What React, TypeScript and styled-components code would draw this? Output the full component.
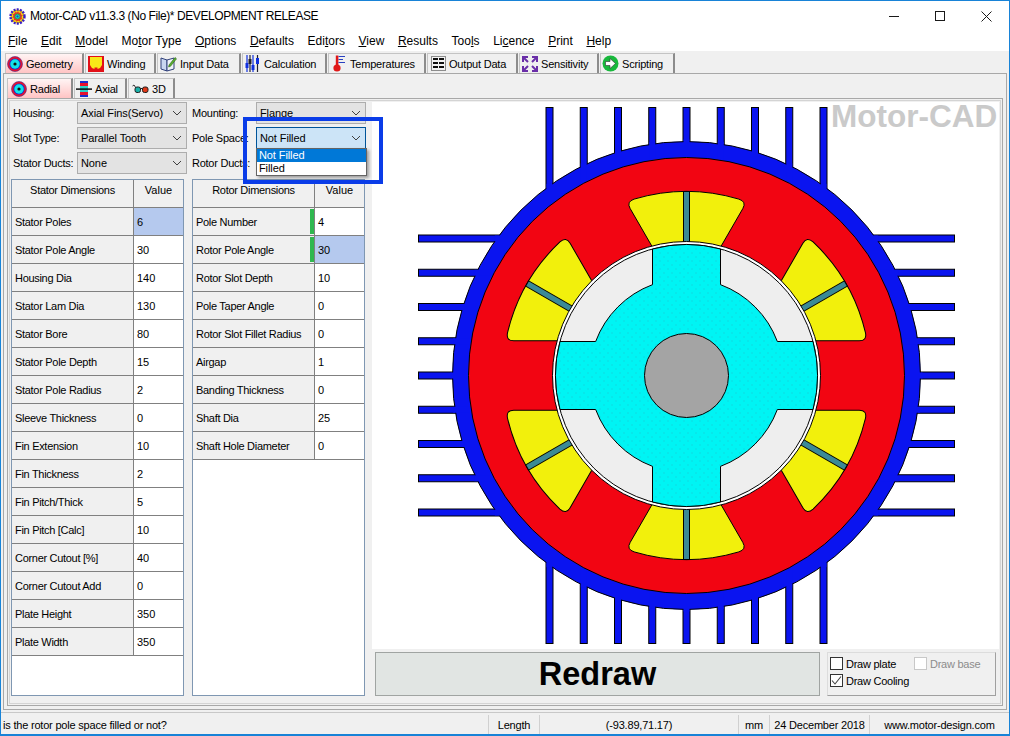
import React from "react";
import styled, { createGlobalStyle } from "styled-components";

const GlobalStyle = createGlobalStyle`
  html, body {
    margin: 0;
    padding: 0;
    background: #ffffff;
  }
  * {
    box-sizing: border-box;
  }
`;

const uiFont = `"Liberation Sans", Arial, sans-serif`;

const Window = styled.div`
  width: 1010px;
  height: 736px;
  display: flex;
  flex-direction: column;
  background: #f0f0f0;
  border: 1px solid #1883d7;
  border-bottom-width: 2px;
  font-family: ${uiFont};
  font-size: 11px;
  color: #000000;
  overflow: hidden;
`;

const TitleBar = styled.div`
  height: 30px;
  flex: none;
  display: flex;
  align-items: center;
  background: #ffffff;
  padding-left: 8px;
`;

const TitleText = styled.div`
  margin-left: 4px;
  font-size: 12px;
  letter-spacing: -0.42px;
  flex: 1;
  white-space: nowrap;
`;

const WinButton = styled.div`
  width: 46px;
  height: 30px;
  display: flex;
  align-items: center;
  justify-content: center;
`;

const MenuBar = styled.div`
  height: 20px;
  flex: none;
  display: flex;
  align-items: center;
  gap: 13.6px;
  padding-left: 7px;
  background: #ffffff;
  font-size: 12px;
`;

const MainTabs = styled.div`
  height: 22px;
  flex: none;
  display: flex;
  align-items: flex-end;
  padding-left: 4px;
  gap: 1px;
`;

const Tab = styled.div<{ $width: number; $pad: number; $active?: boolean }>`
  width: ${(p) => p.$width}px;
  height: 20px;
  display: flex;
  align-items: center;
  gap: 3px;
  padding-left: ${(p) => p.$pad}px;
  white-space: nowrap;
  letter-spacing: -0.2px;
  background: ${(p) =>
    p.$active ? "linear-gradient(#fff4f4, #ffc4c4)" : "#f0f0f0"};
  border: 1px solid #c4c4c4;
  border-bottom: none;
  border-right: 2px solid #8c8c8c;
`;

const MainPage = styled.div`
  height: 637px;
  flex: none;
  margin: 0 2px 0 2px;
  border: 1px solid #a8a8a8;
  padding: 4px 3px 3px 3px;
  display: flex;
  flex-direction: column;
`;

const SubTabs = styled.div`
  height: 20px;
  flex: none;
  display: flex;
  gap: 1px;
  align-items: flex-end;
`;

const SubPage = styled.div`
  flex: 1;
  min-height: 0;
  border: 1px solid #a8a8a8;
  outline: 1px solid #d4d4d4;
  outline-offset: -3px;
  padding-top: 3px;
  display: flex;
`;

const LeftPanel = styled.div`
  width: 364px;
  flex: none;
  padding-left: 3px;
  display: flex;
  flex-direction: column;
`;

const FormGrid = styled.div`
  display: grid;
  grid-template-columns: 64px 110px 69px 110px;
  grid-auto-rows: 22px;
  row-gap: 3px;
  padding-left: 2px;
`;

const FieldLabel = styled.div<{ $offset?: boolean }>`
  display: flex;
  align-items: center;
  white-space: nowrap;
  letter-spacing: -0.25px;
  margin-left: ${(p) => (p.$offset ? "5px" : "0")};
`;

const Field = styled.div`
  position: relative;
`;

const SelectBox = styled.div<{ $focus?: boolean }>`
  height: 22px;
  display: flex;
  align-items: center;
  justify-content: space-between;
  padding: 0 4px 0 3px;
  letter-spacing: -0.1px;
  background: ${(p) => (p.$focus ? "#cce4f7" : "#e3e3e3")};
  border: 1px solid ${(p) => (p.$focus ? "#005499" : "#adadad")};
`;

const DropList = styled.div`
  position: absolute;
  left: 0;
  top: 21px;
  width: 111px;
  background: #ffffff;
  border: 1px solid #646464;
  box-shadow: 2px 2px 3px rgba(0, 0, 0, 0.35);
  z-index: 3;
`;

const DropItem = styled.div<{ $selected?: boolean }>`
  height: 13px;
  line-height: 13px;
  padding-left: 2px;
  letter-spacing: -0.1px;
  background: ${(p) => (p.$selected ? "#0078d7" : "#ffffff")};
  color: ${(p) => (p.$selected ? "#ffffff" : "#000000")};
`;

const HighlightBox = styled.div`
  position: absolute;
  left: -13px;
  top: -10px;
  width: 140px;
  height: 67px;
  border: 4px solid #0a3ce8;
  z-index: 4;
  pointer-events: none;
`;

const TablesRow = styled.div`
  margin-top: 5px;
  display: flex;
  gap: 8px;
`;

const DimTable = styled.div`
  width: 173px;
  height: 517px;
  background: #ffffff;
  border: 1px solid #7f97b2;
`;

const Row = styled.div`
  height: 28px;
  display: grid;
  grid-template-columns: 122px 1fr;
  border-bottom: 1px solid #808080;
`;

const LabelCell = styled.div<{ $header?: boolean }>`
  position: relative;
  display: flex;
  align-items: center;
  justify-content: ${(p) => (p.$header ? "center" : "flex-start")};
  padding-left: ${(p) => (p.$header ? "0" : "3px")};
  padding-bottom: ${(p) => (p.$header ? "7px" : "0")};
  background: #f0f0f0;
  border-right: 1px solid #808080;
  letter-spacing: -0.3px;
  white-space: nowrap;
`;

const Marker = styled.span`
  position: absolute;
  right: 0;
  top: 1px;
  bottom: 1px;
  width: 4px;
  background: #2fb84f;
`;

const ValueCell = styled.div<{ $header?: boolean; $selected?: boolean }>`
  display: flex;
  align-items: center;
  justify-content: ${(p) => (p.$header ? "center" : "flex-start")};
  padding-left: ${(p) => (p.$header ? "0" : "3px")};
  padding-bottom: ${(p) => (p.$header ? "7px" : "0")};
  background: ${(p) =>
    p.$header ? "#f0f0f0" : p.$selected ? "#b5c9ee" : "#ffffff"};
`;

const RightPanel = styled.div`
  flex: 1;
  min-width: 0;
  display: flex;
  flex-direction: column;
  padding-right: 3px;
`;

const Canvas = styled.div`
  height: 547px;
  flex: none;
  background: #ffffff;
`;

const BottomRow = styled.div`
  margin-top: 3px;
  height: 44px;
  display: flex;
  padding-left: 3px;
  gap: 7px;
`;

const RedrawButton = styled.div`
  width: 445px;
  height: 44px;
  display: flex;
  align-items: center;
  justify-content: center;
  background: #e1e5e3;
  border: 1px solid #a0a4a2;
  font-size: 32.5px;
  font-weight: bold;
`;

const OptionsBox = styled.div`
  width: 169px;
  height: 44px;
  border: 1px solid #dcdcdc;
  border-right-color: #a0a0a0;
  border-bottom-color: #a0a0a0;
  padding: 2px 0 0 2px;
  display: grid;
  grid-template-columns: 84px 1fr;
  grid-auto-rows: 17px;
  align-content: start;
`;

const CheckRow = styled.div<{ $disabled?: boolean }>`
  display: flex;
  align-items: center;
  gap: 3px;
  letter-spacing: -0.25px;
  white-space: nowrap;
  color: ${(p) => (p.$disabled ? "#8c8c8c" : "#000000")};
`;

const CheckBox = styled.span<{ $disabled?: boolean }>`
  width: 13px;
  height: 13px;
  display: flex;
  align-items: center;
  justify-content: center;
  background: #ffffff;
  border: 1px solid ${(p) => (p.$disabled ? "#c8c8c8" : "#333333")};
`;

const StatusBar = styled.div`
  flex: 1;
  display: flex;
  align-items: center;
  margin-top: 2px;
  padding-top: 2px;
  border-top: 1px solid #c8c8c8;
`;

const StatusCell = styled.div<{ $width: number; $left?: boolean }>`
  width: ${(p) => p.$width}px;
  height: 20px;
  flex: none;
  display: flex;
  align-items: center;
  justify-content: ${(p) => (p.$left ? "flex-start" : "center")};
  padding-left: ${(p) => (p.$left ? "2px" : "0")};
  border-right: 1px solid #d0d0d0;
  white-space: nowrap;
  letter-spacing: -0.2px;
  &:last-child {
    border-right: none;
  }
`;

const menus: [string, string, string][] = [
  ["", "F", "ile"],
  ["", "E", "dit"],
  ["", "M", "odel"],
  ["Mo", "t", "or Type"],
  ["", "O", "ptions"],
  ["", "D", "efaults"],
  ["Edi", "t", "ors"],
  ["", "V", "iew"],
  ["", "R", "esults"],
  ["Too", "l", "s"],
  ["Li", "c", "ence"],
  ["", "P", "rint"],
  ["", "H", "elp"],
];

const statorRows: [string, string][] = [
  ["Stator Poles", "6"],
  ["Stator Pole Angle", "30"],
  ["Housing Dia", "140"],
  ["Stator Lam Dia", "130"],
  ["Stator Bore", "80"],
  ["Stator Pole Depth", "15"],
  ["Stator Pole Radius", "2"],
  ["Sleeve Thickness", "0"],
  ["Fin Extension", "10"],
  ["Fin Thickness", "2"],
  ["Fin Pitch/Thick", "5"],
  ["Fin Pitch [Calc]", "10"],
  ["Corner Cutout [%]", "40"],
  ["Corner Cutout Add", "0"],
  ["Plate Height", "350"],
  ["Plate Width", "350"],
];

const rotorRows: [string, string][] = [
  ["Pole Number", "4"],
  ["Rotor Pole Angle", "30"],
  ["Rotor Slot Depth", "10"],
  ["Pole Taper Angle", "0"],
  ["Rotor Slot Fillet Radius", "0"],
  ["Airgap", "1"],
  ["Banding Thickness", "0"],
  ["Shaft Dia", "25"],
  ["Shaft Hole Diameter", "0"],
];

const MotorIcon = () => (
  <svg width="16" height="16" viewBox="0 0 16 16">
    <circle cx="8" cy="8" r="7.5" fill="#e8112d" stroke="#4a2a8a" strokeWidth="0.6" />
    <circle cx="8" cy="8" r="5.6" fill="#1a2fd0" />
    <circle cx="8" cy="8" r="4.7" fill="#12e2e8" />
    <circle cx="8" cy="8" r="1.6" fill="#101010" />
  </svg>
);

const AppIcon = () => (
  <svg width="17" height="17" viewBox="0 0 17 17">
    <circle cx="8.5" cy="8.5" r="7" fill="#e6b400" stroke="#3a20c8" strokeWidth="2.4" strokeDasharray="2 1.2" />
    <circle cx="8.5" cy="8.5" r="5" fill="#e8302a" stroke="#f0e020" strokeWidth="1.2" strokeDasharray="2 1" />
    <circle cx="8.5" cy="8.5" r="2.6" fill="#10c8d0" stroke="#30a040" strokeWidth="1" />
    <circle cx="8.5" cy="8.5" r="1" fill="#2040c0" />
  </svg>
);

const WindingIcon = () => (
  <svg width="16" height="16" viewBox="0 0 16 16">
    <rect x="0" y="0" width="16" height="16" fill="#e21018" />
    <path d="M2 1 H14 V9 Q13 12 9.5 13 V11.5 H6.5 V13 Q3 12 2 9 Z" fill="#f8e818" />
  </svg>
);

const BookIcon = () => (
  <svg width="17" height="16" viewBox="0 0 17 16">
    <path d="M1 2 L7 4 V15 L1 13 Z" fill="#c8d6f0" stroke="#30407a" />
    <path d="M7 4 L14 2 V13 L7 15 Z" fill="#eef2fa" stroke="#30407a" />
    <path d="M9 9 L15 1.5 L16.5 2.8 L10.5 10.3 L8.6 11 Z" fill="#58b030" stroke="#2c6018" strokeWidth="0.6" />
  </svg>
);

const SlidersIcon = () => (
  <svg width="16" height="17" viewBox="0 0 16 17">
    <g stroke="#1030e0" strokeWidth="1.2">
      <line x1="2" y1="0" x2="2" y2="17" />
      <line x1="8" y1="0" x2="8" y2="17" />
    </g>
    <g stroke="#202030" strokeWidth="1.2">
      <line x1="5" y1="0" x2="5" y2="17" />
      <line x1="12.5" y1="0" x2="12.5" y2="17" />
    </g>
    <rect x="0.5" y="8" width="3" height="5" fill="#1030e0" />
    <rect x="3.5" y="4" width="3" height="5" fill="#202030" />
    <rect x="6.5" y="10" width="3" height="5" fill="#1030e0" />
    <rect x="11" y="3" width="3" height="6" fill="#1030e0" />
  </svg>
);

const ThermoIcon = () => (
  <svg width="15" height="17" viewBox="0 0 15 17">
    <rect x="3.8" y="0.5" width="2.6" height="12" fill="#e01818" />
    <circle cx="5" cy="13" r="3.6" fill="#e01818" />
    <g stroke="#2840c0" strokeWidth="1">
      <line x1="6.5" y1="1.5" x2="13" y2="1.5" />
      <line x1="6.5" y1="4.5" x2="11" y2="4.5" />
      <line x1="6.5" y1="7.5" x2="13" y2="7.5" />
    </g>
  </svg>
);

const GridIcon = () => (
  <svg width="15" height="15" viewBox="0 0 15 15">
    <rect x="0.5" y="0.5" width="14" height="14" fill="#f4f4f4" stroke="#8c8c8c" />
    <g fill="#111111">
      <rect x="2" y="2" width="5" height="2" />
      <rect x="8" y="2" width="5" height="2" />
      <rect x="2" y="6" width="5" height="2" />
      <rect x="8" y="6" width="5" height="2" />
      <rect x="2" y="10" width="5" height="2" />
      <rect x="8" y="10" width="5" height="2" />
    </g>
  </svg>
);

const SpreadIcon = () => (
  <svg width="16" height="16" viewBox="0 0 16 16" fill="none" stroke="#6a2ea8" strokeWidth="2">
    <path d="M1 6 V1 H6 M1 1 L6 6" />
    <path d="M10 1 H15 V6 M15 1 L10 6" />
    <path d="M1 10 V15 H6 M1 15 L6 10" />
    <path d="M10 15 H15 V10 M15 15 L10 10" />
  </svg>
);

const GoIcon = () => (
  <svg width="17" height="17" viewBox="0 0 17 17">
    <circle cx="8.5" cy="8.5" r="8" fill="#18b83c" />
    <path d="M3.5 6.5 H8 V3.5 L13.5 8.5 L8 13.5 V10.5 H3.5 Z" fill="#ffffff" stroke="#303030" strokeWidth="0.6" />
  </svg>
);

const AxialIcon = () => (
  <svg width="16" height="16" viewBox="0 0 16 16">
    <rect x="4" y="0" width="8" height="2" fill="#1a2fd0" />
    <rect x="4" y="2" width="8" height="3" fill="#e8112d" />
    <rect x="4" y="5" width="8" height="6" fill="#30d0c8" />
    <rect x="4" y="11" width="8" height="3" fill="#e8112d" />
    <rect x="4" y="14" width="8" height="2" fill="#1a2fd0" />
    <rect x="0" y="7.4" width="16" height="1.4" fill="#000000" />
  </svg>
);

const GlassesIcon = () => (
  <svg width="17" height="10" viewBox="0 0 17 10">
    <path d="M0.5 2 L2 1 M2 1 L4 4" stroke="#303030" fill="none" />
    <rect x="3" y="3" width="5.5" height="5.5" rx="2" fill="#18b0a8" stroke="#202020" />
    <rect x="10.5" y="3" width="5.5" height="5.5" rx="2" fill="#e03818" stroke="#202020" />
    <line x1="8.5" y1="4.5" x2="10.5" y2="4.5" stroke="#202020" />
  </svg>
);

const Chevron = () => (
  <svg width="10" height="6" viewBox="0 0 10 6" fill="none" stroke="#404040" strokeWidth="1">
    <path d="M1 1 L5 5 L9 1" />
  </svg>
);

type TabInfo = { label: string; width: number; pad: number; icon: React.ReactNode };

const mainTabs: TabInfo[] = [
  { label: "Geometry", width: 79, pad: 1, icon: <MotorIcon /> },
  { label: "Winding", width: 71, pad: 2, icon: <WindingIcon /> },
  { label: "Input Data", width: 84, pad: 2, icon: <BookIcon /> },
  { label: "Calculation", width: 85, pad: 2, icon: <SlidersIcon /> },
  { label: "Temperatures", width: 98, pad: 3, icon: <ThermoIcon /> },
  { label: "Output Data", width: 91, pad: 3, icon: <GridIcon /> },
  { label: "Sensitivity", width: 80, pad: 2, icon: <SpreadIcon /> },
  { label: "Scripting", width: 75, pad: 1, icon: <GoIcon /> },
];

const subTabs: TabInfo[] = [
  { label: "Radial", width: 66, pad: 3, icon: <MotorIcon /> },
  { label: "Axial", width: 53, pad: 1, icon: <AxialIcon /> },
  { label: "3D", width: 47, pad: 3, icon: <GlassesIcon /> },
];

// motor cross section, all sizes from the tables at 3.35 px per mm
const R_HOUSING = 234;
const R_STATOR = 218;
const R_SLOT = 184;
const R_BORE = 134;
const R_ROTOR = 131;
const R_CORE = 97;
const R_SHAFT = 42;
const ARM = 34;
const FIN_PITCH = 34.25;
const FIN_END = 268;

const num = (n: number) => n.toFixed(2);

const rot = (x: number, y: number, deg: number): [number, number] => {
  const a = (deg * Math.PI) / 180;
  return [x * Math.cos(a) - y * Math.sin(a), x * Math.sin(a) + y * Math.cos(a)];
};

const slotPath = () => {
  const half = R_BORE * Math.sin((15 * Math.PI) / 180);
  const t0 = Math.sqrt(R_BORE * R_BORE - half * half);
  const t1 = Math.sqrt(R_SLOT * R_SLOT - half * half);
  // side of the pole at 30 degrees left of the slot axis
  const side = (t: number): [number, number] => rot(half, -t, -30);
  const [bx, by] = side(t0 - 6);
  const [cx, cy] = side(t1);
  const [sx, sy] = side(t1 - 8);
  const [ax, ay] = rot(cx, cy, 2.6);
  return (
    `M${num(bx)} ${num(by)} L${num(sx)} ${num(sy)} Q${num(cx)} ${num(cy)} ${num(ax)} ${num(ay)} ` +
    `A${R_SLOT} ${R_SLOT} 0 0 1 ${num(-ax)} ${num(ay)} Q${num(-cx)} ${num(cy)} ${num(-sx)} ${num(sy)} L${num(-bx)} ${num(by)} Z`
  );
};

const rotorPath = () => {
  const yt = Math.sqrt(R_ROTOR * R_ROTOR - ARM * ARM);
  const yc = Math.sqrt(R_CORE * R_CORE - ARM * ARM);
  let d = "";
  [0, 90, 180, 270].forEach((a, i) => {
    const p1 = rot(-ARM, -yc, a);
    const p2 = rot(-ARM, -yt, a);
    const p3 = rot(ARM, -yt, a);
    const p4 = rot(ARM, -yc, a);
    const next = rot(-ARM, -yc, a + 90);
    d += `${i === 0 ? "M" : "L"}${num(p1[0])} ${num(p1[1])} L${num(p2[0])} ${num(p2[1])} `;
    d += `A${R_ROTOR} ${R_ROTOR} 0 0 1 ${num(p3[0])} ${num(p3[1])} L${num(p4[0])} ${num(p4[1])} `;
    d += `A${R_CORE} ${R_CORE} 0 0 1 ${num(next[0])} ${num(next[1])} `;
  });
  return d + "Z";
};

const finOffsets = [-4, -3, -2, -1, 0, 1, 2, 3, 4].map((i) => i * FIN_PITCH);

const MotorDrawing = () => (
  <svg width="628" height="547" viewBox="-314.5 -273.5 628 547" overflow="visible">
    <defs>
      <pattern id="cyanDots" width="8" height="8" patternUnits="userSpaceOnUse">
        <rect width="8" height="8" fill="#00f4f4" />
        <rect x="1" y="1" width="1" height="1" fill="#1cc4d0" />
        <rect x="5" y="5" width="1" height="1" fill="#1cc4d0" />
      </pattern>
      <pattern id="shaftDots" width="2" height="2" patternUnits="userSpaceOnUse">
        <rect width="2" height="2" fill="#a8a8a8" />
        <rect width="1" height="1" fill="#989898" />
      </pattern>
    </defs>
    <g fill="#0a14f0" stroke="#000000" strokeWidth="1">
      {finOffsets.map((o) => (
        <React.Fragment key={o}>
          <rect x={o - 3.5} y={-FIN_END} width="7" height={FIN_END * 2} />
          <rect x={-FIN_END} y={o - 3.5} width={FIN_END * 2} height="7" />
        </React.Fragment>
      ))}
      <circle r={R_HOUSING} />
    </g>
    <g fill="#0a14f0">
      {finOffsets.map((o) => {
        const reach = Math.sqrt(R_HOUSING * R_HOUSING - o * o) + 2;
        return (
          <React.Fragment key={o}>
            <rect x={o - 3} y={-reach} width="6" height={reach * 2} />
            <rect x={-reach} y={o - 3} width={reach * 2} height="6" />
          </React.Fragment>
        );
      })}
    </g>
    <circle r={R_STATOR} fill="#f20512" stroke="#000000" />
    {[0, 60, 120, 180, 240, 300].map((a) => (
      <g key={a} transform={`rotate(${a})`}>
        <path d={slotPath()} fill="#f2f00c" stroke="#000000" strokeWidth="1" />
        <rect x="-3" y={-R_SLOT} width="6" height="52" fill="#3b8a96" stroke="#000000" strokeWidth="1" />
      </g>
    ))}
    <circle r={R_BORE} fill="#ffffff" stroke="#000000" />
    <circle r={R_ROTOR} fill="#eeeeee" stroke="#000000" />
    <path d={rotorPath()} fill="url(#cyanDots)" stroke="#000000" />
    <circle r={R_SHAFT} fill="url(#shaftDots)" stroke="#000000" />
    <text
      x="144.5"
      y="-248.5"
      fontFamily={uiFont}
      fontSize="31.5"
      fontWeight="bold"
      fill="#cacaca"
    >
      Motor-CAD
    </text>
  </svg>
);

const SelectField = ({ value, focus }: { value: string; focus?: boolean }) => (
  <SelectBox $focus={focus}>
    <span>{value}</span>
    <Chevron />
  </SelectBox>
);

const Dimensions = ({
  title,
  rows,
  selected,
  marked,
}: {
  title: string;
  rows: [string, string][];
  selected: string;
  marked?: string[];
}) => (
  <DimTable>
    <Row>
      <LabelCell $header>{title}</LabelCell>
      <ValueCell $header>Value</ValueCell>
    </Row>
    {rows.map(([label, value]) => (
      <Row key={label}>
        <LabelCell>
          {label}
          {marked?.includes(label) && <Marker />}
        </LabelCell>
        <ValueCell $selected={label === selected}>{value}</ValueCell>
      </Row>
    ))}
  </DimTable>
);

const App: React.FC = () => {
  return (
    <>
      <GlobalStyle />
      <Window>
        <TitleBar>
          <AppIcon />
          <TitleText>Motor-CAD v11.3.3 (No File)* DEVELOPMENT RELEASE</TitleText>
          <WinButton>
            <svg width="11" height="11" viewBox="0 0 11 11" stroke="#1a1a1a">
              <line x1="0" y1="5.5" x2="10" y2="5.5" />
            </svg>
          </WinButton>
          <WinButton>
            <svg width="11" height="11" viewBox="0 0 11 11" fill="none" stroke="#1a1a1a">
              <rect x="0.5" y="0.5" width="9" height="9" />
            </svg>
          </WinButton>
          <WinButton>
            <svg width="11" height="11" viewBox="0 0 11 11" stroke="#1a1a1a">
              <path d="M0.5 0.5 L10.5 10.5 M10.5 0.5 L0.5 10.5" />
            </svg>
          </WinButton>
        </TitleBar>

        <MenuBar>
          {menus.map(([before, key, after]) => (
            <span key={before + key + after}>
              {before}
              <u>{key}</u>
              {after}
            </span>
          ))}
        </MenuBar>

        <MainTabs>
          {mainTabs.map((t) => (
            <Tab key={t.label} $width={t.width} $pad={t.pad} $active={t.label === "Geometry"}>
              {t.icon}
              {t.label}
            </Tab>
          ))}
        </MainTabs>

        <MainPage>
          <SubTabs>
            {subTabs.map((t) => (
              <Tab key={t.label} $width={t.width} $pad={t.pad} $active={t.label === "Radial"}>
                {t.icon}
                {t.label}
              </Tab>
            ))}
          </SubTabs>
          <SubPage>
            <LeftPanel>
              <FormGrid>
                <FieldLabel>Housing:</FieldLabel>
                <SelectField value="Axial Fins(Servo)" />
                <FieldLabel $offset>Mounting:</FieldLabel>
                <SelectField value="Flange" />
                <FieldLabel>Slot Type:</FieldLabel>
                <SelectField value="Parallel Tooth" />
                <FieldLabel $offset>Pole Space:</FieldLabel>
                <Field>
                  <SelectField value="Not Filled" focus />
                  <DropList>
                    <DropItem $selected>Not Filled</DropItem>
                    <DropItem>Filled</DropItem>
                  </DropList>
                  <HighlightBox />
                </Field>
                <FieldLabel>Stator Ducts:</FieldLabel>
                <SelectField value="None" />
                <FieldLabel $offset>Rotor Ducts:</FieldLabel>
                <SelectBox />
              </FormGrid>
              <TablesRow>
                <Dimensions title="Stator Dimensions" rows={statorRows} selected="Stator Poles" />
                <Dimensions
                  title="Rotor Dimensions"
                  rows={rotorRows}
                  selected="Rotor Pole Angle"
                  marked={["Pole Number", "Rotor Pole Angle"]}
                />
              </TablesRow>
            </LeftPanel>
            <RightPanel>
              <Canvas>
                <MotorDrawing />
              </Canvas>
              <BottomRow>
                <RedrawButton>Redraw</RedrawButton>
                <OptionsBox>
                  <CheckRow>
                    <CheckBox />
                    Draw plate
                  </CheckRow>
                  <CheckRow $disabled>
                    <CheckBox $disabled />
                    Draw base
                  </CheckRow>
                  <CheckRow>
                    <CheckBox>
                      <svg width="11" height="11" viewBox="0 0 11 11" fill="none" stroke="#444444" strokeWidth="1.1">
                        <path d="M1 5.5 L4 9 L10 1.5" />
                      </svg>
                    </CheckBox>
                    Draw Cooling
                  </CheckRow>
                </OptionsBox>
              </BottomRow>
            </RightPanel>
          </SubPage>
        </MainPage>

        <StatusBar>
          <StatusCell $width={488} $left>is the rotor pole space filled or not?</StatusCell>
          <StatusCell $width={51}>Length</StatusCell>
          <StatusCell $width={199}>(-93.89,71.17)</StatusCell>
          <StatusCell $width={31}>mm</StatusCell>
          <StatusCell $width={100}>24 December 2018</StatusCell>
          <StatusCell $width={139}>www.motor-design.com</StatusCell>
        </StatusBar>
      </Window>
    </>
  );
};

export default App;
